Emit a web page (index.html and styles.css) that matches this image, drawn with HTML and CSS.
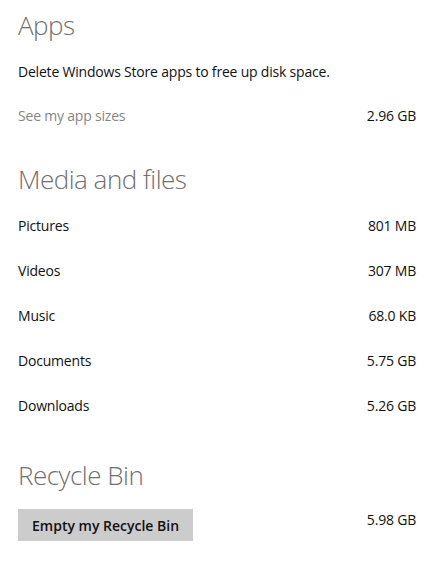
FILE: index.html
```html
<!DOCTYPE html>
<html lang="en">
<head>
<meta charset="utf-8">
<title>Storage</title>
<link rel="stylesheet" href="styles.css">
</head>
<body>
<main class="page">
  <section class="section section-apps">
    <h2 class="heading">Apps</h2>
    <p class="desc">Delete Windows Store apps to free up disk space.</p>
    <div class="row">
      <span class="label link">See my app sizes</span>
      <span class="value">2.96 GB</span>
    </div>
  </section>

  <section class="section section-media">
    <h2 class="heading">Media and files</h2>
    <div class="rows">
      <div class="row"><span class="label">Pictures</span><span class="value">801 MB</span></div>
      <div class="row"><span class="label">Videos</span><span class="value">307 MB</span></div>
      <div class="row"><span class="label">Music</span><span class="value">68.0 KB</span></div>
      <div class="row"><span class="label">Documents</span><span class="value">5.75 GB</span></div>
      <div class="row"><span class="label">Downloads</span><span class="value">5.26 GB</span></div>
    </div>
  </section>

  <section class="section section-bin">
    <h2 class="heading">Recycle Bin</h2>
    <div class="bin-row">
      <button class="btn" type="button">Empty my Recycle Bin</button>
      <span class="value">5.98 GB</span>
    </div>
  </section>
</main>
</body>
</html>
```

FILE: styles.css
```css
html, body {
  margin: 0;
  padding: 0;
  background: #ffffff;
}

body {
  font-family: "Open Sans", "Noto Sans", "Liberation Sans", sans-serif;
  font-size: 14px;
  letter-spacing: -0.2px;
  color: #111111;
}

.page {
  display: flex;
  flex-direction: column;
  padding: 7px 17px 0 18px;
}

.heading {
  margin: 0;
  font-size: 26px;
  font-weight: 300;
  line-height: 36px;
  letter-spacing: -0.5px;
  color: #707070;
}

.desc {
  margin: 6px 0 0 0;
  height: 44px;
  line-height: 45px;
}

.row {
  display: flex;
  justify-content: space-between;
  align-items: baseline;
  height: 45px;
  line-height: 45px;
}

.link {
  color: #858585;
}

.section-media {
  margin-top: 23px;
}

.rows {
  margin-top: 6px;
  display: flex;
  flex-direction: column;
}

.section-bin {
  margin-top: 29px;
}

.bin-row {
  margin-top: 16px;
  display: flex;
  justify-content: space-between;
  align-items: flex-start;
}

.bin-row .value {
  line-height: 22px;
}

.btn {
  font-family: inherit;
  font-size: 14px;
  font-weight: 600;
  letter-spacing: 0;
  color: #111111;
  background: #cccccc;
  border: 0;
  height: 32px;
  padding: 0 14px;
  margin: 0;
}
```
